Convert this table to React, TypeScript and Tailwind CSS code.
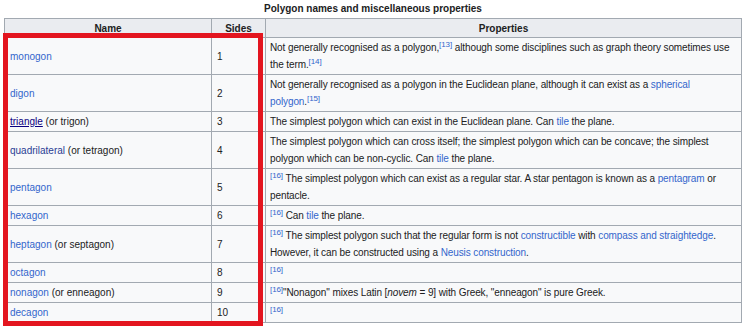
import React from "react";

type Row = {
  name: React.ReactNode;
  sides: string;
  props: React.ReactNode;
};

const A = ({ children }: { children: React.ReactNode }) => (
  <span className="text-[#3366cc]">{children}</span>
);

const Ref = ({ n }: { n: number }) => (
  <sup className="text-[#3366cc] text-[8px]">[{n}]</sup>
);

const rows: Row[] = [
  {
    name: <A>monogon</A>,
    sides: "1",
    props: (
      <>
        Not generally recognised as a polygon,
        <Ref n={13} /> although some disciplines such as graph theory sometimes
        use the term.
        <Ref n={14} />
      </>
    ),
  },
  {
    name: <A>digon</A>,
    sides: "2",
    props: (
      <>
        Not generally recognised as a polygon in the Euclidean plane, although
        it can exist as a <A>spherical</A>{" "}
        <span className="whitespace-nowrap">
          <A>polygon</A>.
          <Ref n={15} />
        </span>
      </>
    ),
  },
  {
    name: (
      <>
        <span className="text-[#0b0080] underline">triangle</span> (or trigon)
      </>
    ),
    sides: "3",
    props: (
      <>
        The simplest polygon which can exist in the Euclidean plane. Can{" "}
        <A>tile</A> the plane.
      </>
    ),
  },
  {
    name: (
      <>
        <span className="text-[#2a3d94]">quadrilateral</span> (or tetragon)
      </>
    ),
    sides: "4",
    props: (
      <>
        The simplest polygon which can cross itself; the simplest polygon which
        can be concave; the simplest polygon which can be non-cyclic. Can{" "}
        <A>tile</A> the plane.
      </>
    ),
  },
  {
    name: <A>pentagon</A>,
    sides: "5",
    props: (
      <>
        <Ref n={16} /> The simplest polygon which can exist as a regular star.
        A star pentagon is known as a <A>pentagram</A> or pentacle.
      </>
    ),
  },
  {
    name: <A>hexagon</A>,
    sides: "6",
    props: (
      <>
        <Ref n={16} /> Can <A>tile</A> the plane.
      </>
    ),
  },
  {
    name: (
      <>
        <A>heptagon</A> (or septagon)
      </>
    ),
    sides: "7",
    props: (
      <>
        <Ref n={16} /> The simplest polygon such that the regular form is not{" "}
        <A>constructible</A> with <A>compass and straightedge</A>. However, it
        can be constructed using a <A>Neusis construction</A>.
      </>
    ),
  },
  { name: <A>octagon</A>, sides: "8", props: <Ref n={16} /> },
  {
    name: (
      <>
        <A>nonagon</A> (or enneagon)
      </>
    ),
    sides: "9",
    props: (
      <>
        <Ref n={16} />
        "Nonagon" mixes Latin [<i>novem</i> = 9] with Greek, "enneagon" is pure
        Greek.
      </>
    ),
  },
  { name: <A>decagon</A>, sides: "10", props: <Ref n={16} /> },
];

export default function App() {
  return (
    <div className="relative w-[743px] h-[327px] overflow-hidden bg-white font-['Liberation_Sans',Arial,sans-serif] text-[10px] text-[#202122]">
      <table className="ml-[4px] w-[737px] table-fixed border-collapse bg-[#f8f9fa]">
        <caption className="h-[18px] bg-white text-center font-bold leading-[18px]">
          Polygon names and miscellaneous properties
        </caption>
        <colgroup>
          <col className="w-[207px]" />
          <col className="w-[54px]" />
          <col className="w-[476px]" />
        </colgroup>
        <thead>
          <tr className="bg-[#eaecf0]">
            <th className="h-[19px] border border-[#a2a9b1] px-1 py-0 text-center leading-[17px]">
              Name
            </th>
            <th className="border border-[#a2a9b1] px-1 py-0 text-center leading-[17px]">
              Sides
            </th>
            <th className="border border-[#a2a9b1] px-1 py-0 text-center leading-[17px]">
              Properties
            </th>
          </tr>
        </thead>
        <tbody>
          {rows.map((r) => (
            <tr key={r.sides}>
              <td className="border border-[#a2a9b1] px-[5px] py-px align-middle leading-[17px]">
                {r.name}
              </td>
              <td className="border border-[#a2a9b1] px-[5px] py-px align-middle leading-[17px]">
                {r.sides}
              </td>
              <td className="border border-[#a2a9b1] px-[4px] py-px align-middle leading-[17px] tracking-[-0.1px]">
                {r.props}
              </td>
            </tr>
          ))}
        </tbody>
      </table>
      <div className="pointer-events-none absolute left-[3px] top-[33px] h-[293px] w-[260px] border-[5px] border-[#e3151f]" />
    </div>
  );
}
